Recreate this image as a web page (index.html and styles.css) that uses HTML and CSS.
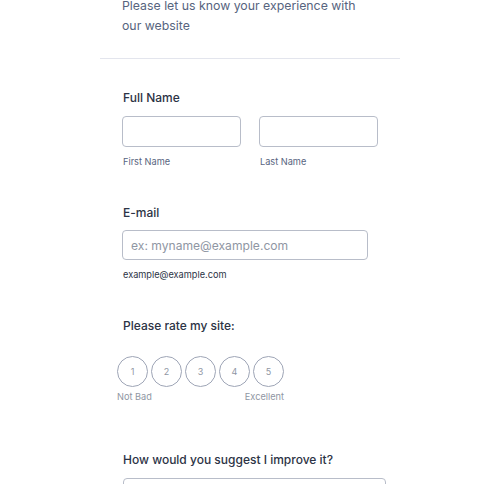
FILE: index.html
```html
<!DOCTYPE html>
<html>
<head>
<meta charset="utf-8">
<link rel="stylesheet" href="styles.css">
</head>
<body>
<div class="form">
  <div class="header">
    <p class="subheader">Please let us know your experience with our website</p>
  </div>
  <div class="field field-name">
    <label class="label">Full Name</label>
    <div class="row">
      <div class="col">
        <div class="input name-input"></div>
        <span class="sublabel">First Name</span>
      </div>
      <div class="col">
        <div class="input name-input"></div>
        <span class="sublabel">Last Name</span>
      </div>
    </div>
  </div>
  <div class="field field-email">
    <label class="label">E-mail</label>
    <div class="input email-input"><span class="placeholder">ex: myname@example.com</span></div>
    <span class="sublabel dark">example@example.com</span>
  </div>
  <div class="field field-rate">
    <label class="label">Please rate my site:</label>
    <div class="scale">
      <div class="circles">
        <span class="circle">1</span>
        <span class="circle">2</span>
        <span class="circle">3</span>
        <span class="circle">4</span>
        <span class="circle">5</span>
      </div>
      <div class="scale-labels">
        <span>Not Bad</span>
        <span>Excellent</span>
      </div>
    </div>
  </div>
  <div class="field field-improve">
    <label class="label">How would you suggest I improve it?</label>
    <div class="textarea"></div>
  </div>
</div>
</body>
</html>
```
FILE: styles.css
```css
* { box-sizing: border-box; }
html, body { margin: 0; padding: 0; background: #ffffff; overflow: hidden; }
body {
  font-family: Inter, "Noto Sans", sans-serif;
  width: 500px;
  height: 484px;
}
.form {
  margin-left: 100px;
  width: 300px;
}
.header {
  margin-top: -4px;
  padding: 0 30px 22px 22px;
  border-bottom: 1px solid #e3e5ed;
}
.subheader {
  margin: 0;
  font-size: 12.3px;
  line-height: 20px;
  color: #57647e;
}
.field {
  padding-left: 23px;
  display: flex;
  flex-direction: column;
  align-items: flex-start;
}
.label {
  display: block;
  padding-top: 1px;
  font-size: 12px;
  font-weight: 500;
  line-height: 20px;
  color: #2c3345;
}
.field-name { margin-top: 28px; padding-left: 22px; }
.field-name .label, .field-email .label { margin-left: 1px; }
.row { display: flex; gap: 18px; margin-top: 8px; }
.col { display: flex; flex-direction: column; }
.input {
  border: 1px solid #b8bdc9;
  border-radius: 4px;
  background: #fff;
}
.name-input { width: 119px; height: 31px; }
.sublabel {
  margin-top: 8px;
  margin-left: 1px;
  font-size: 9.2px;
  line-height: 14px;
  color: #57647e;
}
.sublabel.dark { color: #2c3345; }
.field-email { margin-top: 33px; padding-left: 22px; }
.email-input {
  margin-top: 7px;
  width: 246px;
  height: 30px;
  display: flex;
  align-items: center;
  padding-left: 8px;
}
.placeholder { font-size: 12.1px; color: #8f96a3; }
.field-rate { margin-top: 33px; }
.scale { margin-top: 20px; margin-left: -6px; }
.circles { display: flex; gap: 3px; }
.circle {
  width: 31px;
  height: 31px;
  border: 1px solid #9ea5b6;
  border-radius: 50%;
  display: flex;
  align-items: center;
  justify-content: center;
  font-size: 9px;
  color: #8f96a3;
}
.scale-labels {
  display: flex;
  justify-content: space-between;
  margin-top: 3px;
  font-size: 9.2px;
  line-height: 14px;
  color: #8f96a3;
}
.field-improve { margin-top: 45px; }
.textarea {
  margin-top: 8px;
  width: 263px;
  height: 60px;
  border: 1px solid #b8bdc9;
  border-radius: 4px;
}
```
